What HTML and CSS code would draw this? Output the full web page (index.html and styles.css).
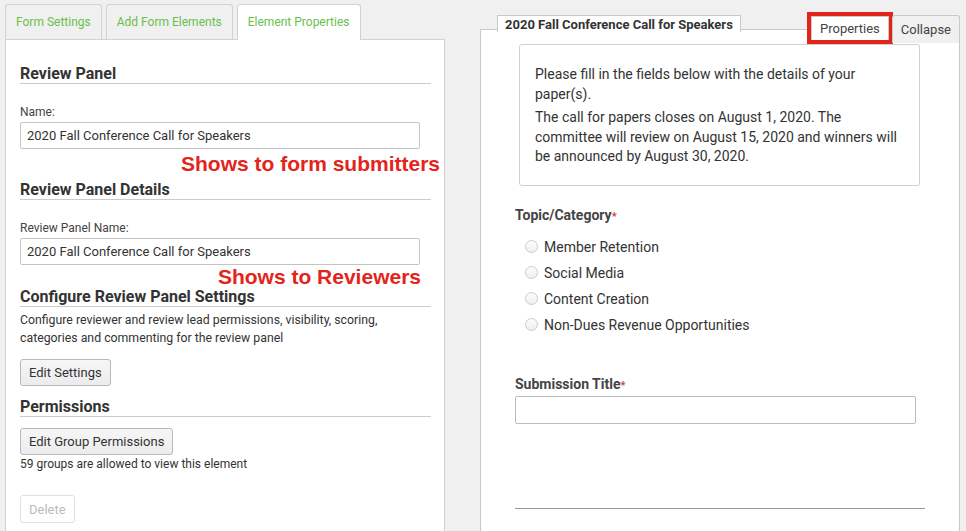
FILE: index.html
```html
<!DOCTYPE html>
<html lang="en-us">
    <head>
        <meta charset="UTF-8">
        <meta name="viewport" content="width=device-width, initial-scale=1.0">
        <title>Form Builder - Element Properties</title>
        <link rel="stylesheet" href="styles.css">
    </head>
    <body>
        <div class="layout">
            <!-- Left side: settings tabs -->
            <div class="side">
                <div class="tabs">
                    <a class="tab">Form Settings</a>
                    <a class="tab">Add Form Elements</a>
                    <a class="tab active">Element Properties</a>
                </div>
                <div class="side-panel">
                    <h2 class="section-title">Review Panel</h2>
                    <label class="field-label first">Name:</label>
                    <div class="input-wrap">
                        <input type="text" class="text-input" value="2020 Fall Conference Call for Speakers">
                        <span class="note note-submitters">Shows to form submitters</span>
                    </div>

                    <h2 class="section-title details">Review Panel Details</h2>
                    <label class="field-label">Review Panel Name:</label>
                    <div class="input-wrap">
                        <input type="text" class="text-input" value="2020 Fall Conference Call for Speakers">
                        <span class="note note-reviewers">Shows to Reviewers</span>
                    </div>

                    <h2 class="section-title configure">Configure Review Panel Settings</h2>
                    <p class="desc">Configure reviewer and review lead permissions, visibility, scoring, categories and commenting for the review panel</p>
                    <button class="btn settings-btn">Edit Settings</button>

                    <h2 class="section-title permissions">Permissions</h2>
                    <button class="btn group-btn">Edit Group Permissions</button>
                    <p class="groups-count">59 groups are allowed to view this element</p>

                    <button class="btn delete-btn" disabled>Delete</button>
                </div>
            </div>

            <!-- Right side: form preview -->
            <div class="preview">
                <div class="form-panel">
                    <div class="legend">2020 Fall Conference Call for Speakers</div>
                    <div class="panel-tabs">
                        <a class="panel-tab properties">Properties</a>
                        <a class="panel-tab collapse">Collapse</a>
                    </div>

                    <div class="intro">
                        <p>Please fill in the fields below with the details of your paper(s).</p>
                        <p>The call for papers closes on August 1, 2020. The committee will review on August 15, 2020 and winners will be announced by August 30, 2020.</p>
                    </div>

                    <div class="question topic">Topic/Category<span class="req">*</span></div>
                    <div class="options">
                        <label class="option"><input type="radio" name="topic"> Member Retention</label>
                        <label class="option"><input type="radio" name="topic"> Social Media</label>
                        <label class="option"><input type="radio" name="topic"> Content Creation</label>
                        <label class="option"><input type="radio" name="topic"> Non-Dues Revenue Opportunities</label>
                    </div>

                    <div class="question title">Submission Title<span class="req">*</span></div>
                    <input type="text" class="title-input">

                    <hr class="divider">
                </div>
            </div>
        </div>
    </body>
</html>
```

FILE: styles.css
```css
/* General Styles */
html, body {
    height: 100%;
}

body {
    margin: 0;
    background-color: #f0f0f0;
    font-family: Roboto, 'Liberation Sans', sans-serif;
    color: #333;
    overflow: hidden;
}

.layout {
    display: flex;
    gap: 35px;
    padding: 4px 6px 0 5px;
}

/* Left side */
.side {
    width: 440px;
    flex-shrink: 0;
}

.tabs {
    display: flex;
    gap: 4px;
    height: 35px;
}

.tab {
    display: block;
    box-sizing: border-box;
    height: 35px;
    padding: 0 10px;
    line-height: 34px;
    font-size: 12px;
    color: #6abf4b;
    background-color: #f0f0f0;
    border: 1px solid #d2d2d2;
    border-bottom: none;
    border-radius: 3px 3px 0 0;
    cursor: pointer;
}

.tab.active {
    background-color: white;
    height: 36px;
    position: relative;
    z-index: 1;
}

.side-panel {
    background-color: white;
    border: 1px solid #d2d2d2;
    padding: 24px 13px 0 14px;
    height: 600px;
}

.section-title {
    margin: 0;
    font-size: 16px;
    line-height: 19px;
    font-weight: bold;
    color: #333;
    border-bottom: 1px solid #ccc;
}

.section-title.details {
    margin-top: 31px;
}

.section-title.configure {
    margin-top: 22px;
}

.section-title.permissions {
    margin-top: 11px;
}

.field-label {
    display: block;
    margin-top: 20px;
    font-size: 12px;
    line-height: 16px;
    color: #444;
}

.input-wrap {
    position: relative;
    margin-top: 2px;
}

.text-input {
    display: block;
    box-sizing: border-box;
    width: 400px;
    height: 27px;
    padding: 0 6px;
    font-family: Roboto, 'Liberation Sans', sans-serif;
    font-size: 13px;
    color: #333;
    border: 1px solid #c4c4c4;
    border-radius: 2px;
    background-color: white;
}

/* Red annotations laid over the panel */
.note {
    position: absolute;
    font-family: 'Liberation Sans', Arial, sans-serif;
    font-weight: bold;
    font-size: 21px;
    line-height: 24px;
    color: #e3241b;
    white-space: nowrap;
}

.note-submitters {
    top: 30px;
    right: -9px;
}

.note-reviewers {
    top: 27px;
    right: 10px;
}

.desc {
    margin: 4px 0 0;
    font-size: 12.3px;
    line-height: 18px;
    color: #333;
}

.btn {
    display: block;
    height: 27px;
    padding: 0 8px;
    font-family: Roboto, 'Liberation Sans', sans-serif;
    font-size: 13px;
    color: #333;
    background: linear-gradient(#f6f6f6, #ececec);
    border: 1px solid #b8b8b8;
    border-radius: 3px;
    cursor: pointer;
}

.settings-btn {
    margin-top: 12px;
}

.group-btn {
    margin-top: 11px;
}

.groups-count {
    margin: 1px 0 0;
    font-size: 12px;
    line-height: 16px;
    color: #333;
}

.delete-btn {
    margin-top: 23px;
    height: 28px;
    color: #bbb;
    background: white;
    border-color: #e0e0e0;
    cursor: default;
}

/* Right side: form preview */
.preview {
    width: 480px;
    flex-shrink: 0;
}

.form-panel {
    position: relative;
    margin-top: 25px;
    height: 600px;
    background-color: white;
    border: 1px solid #c8c8c8;
    padding: 14px 34px 0 34px;
}

.legend {
    position: absolute;
    top: -15px;
    left: 16px;
    height: 15px;
    padding: 1px 7px 0;
    font-size: 13px;
    line-height: 15px;
    font-weight: bold;
    color: #333;
    background-color: white;
    border: 1px solid #c8c8c8;
    border-bottom: none;
}

.panel-tabs {
    position: absolute;
    top: -15px;
    right: -1px;
    display: flex;
    gap: 3px;
}

.panel-tab {
    display: block;
    box-sizing: border-box;
    font-size: 13px;
    color: #444;
    border: 1px solid #c8c8c8;
    border-bottom: none;
}

.panel-tab.properties {
    height: 24px;
    margin-top: 1px;
    padding: 0 8px;
    line-height: 24px;
    background-color: white;
    outline: 4px solid #e3241b;
}

.panel-tab.collapse {
    height: 28px;
    padding: 0 8px;
    line-height: 28px;
    background-color: #f0f0f0;
    border-radius: 3px 3px 0 0;
}

.intro {
    box-sizing: border-box;
    width: 401px;
    margin-left: 4px;
    padding: 20px 15px 18px;
    border: 1px solid #d0d0d0;
    border-radius: 3px;
    font-size: 14px;
    line-height: 19.5px;
}

.intro p {
    margin: 0;
}

.intro p + p {
    margin-top: 4px;
}

.question {
    font-size: 14px;
    line-height: 20px;
    font-weight: bold;
    color: #444;
}

.question.topic {
    margin-top: 19px;
}

.question.title {
    margin-top: 36px;
}

.req {
    color: #d23a3a;
    font-size: 11px;
}

.options {
    margin-top: 7px;
}

.option {
    display: flex;
    align-items: center;
    height: 26px;
    padding-left: 10px;
    font-size: 14px;
    color: #333;
}

.option input {
    appearance: none;
    width: 13px;
    height: 13px;
    margin: 0 6px 0 0;
    border: 1px solid #ccc;
    border-radius: 50%;
    background: linear-gradient(#fdfdfd, #eee);
}

.title-input {
    display: block;
    box-sizing: border-box;
    width: 401px;
    height: 28px;
    margin-top: 0;
    border: 1px solid #bbb;
    border-radius: 2px;
}

.divider {
    margin: 84px 0 0;
    border: none;
    border-top: 1px solid #999;
    width: 410px;
}
```
